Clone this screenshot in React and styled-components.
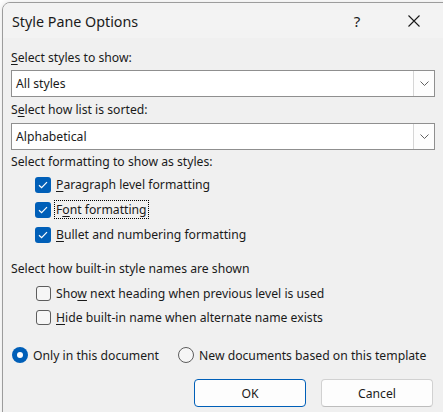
import React from "react";
import styled, { createGlobalStyle } from "styled-components";

const Global = createGlobalStyle`
  html, body { margin: 0; padding: 0; background: #ffffff; overflow: hidden; }
  body { font-family: "Noto Sans", "Open Sans", sans-serif; color: #1a1a1a; }
  * { box-sizing: border-box; }
`;

const Page = styled.div`
  width: 443px;
  height: 412px;
  padding: 2px 0 0 2px;
  overflow: hidden;
`;

const Dialog = styled.div`
  width: 460px;
  height: 420px;
  border: 1px solid #9c9c9c;
  border-radius: 8px 8px 0 0;
  background: #f0f0f0;
  overflow: hidden;
  box-shadow: 0 0 6px rgba(0,0,0,0.12);
`;

const TitleBar = styled.div`
  height: 35px;
  display: flex;
  align-items: center;
  background: #f3f3f3;
  padding-left: 9px;
  padding-top: 1px;
`;

const Title = styled.div`
  flex: 1;
  font-size: 14.3px;
  color: #1a1a1a;
`;

const TitleButton = styled.div`
  width: ${(p) => p.$w}px;
  flex-shrink: 0;
  display: flex;
  align-items: center;
  justify-content: center;
  font-size: 15px;
  color: #1a1a1a;
`;

const Body = styled.div`
  padding: 11px 0 0 8px;
  width: 433px;
  display: flex;
  flex-direction: column;
  font-size: 12.2px;
`;

const Label = styled.div`
  height: 18px;
  line-height: 18px;
  margin-top: ${(p) => p.$mt || 0}px;
  white-space: nowrap;
`;

const U = styled.span`
  text-decoration: underline;
  text-underline-offset: 2px;
`;

const Select = styled.div`
  margin-top: ${(p) => p.$mt || 0}px;
  height: 27px;
  width: 424px;
  background: #ffffff;
  border: 1px solid #8f8f8f;
  display: flex;
  align-items: stretch;
`;

const SelectValue = styled.div`
  flex: 1;
  display: flex;
  align-items: center;
  padding-left: 4px;
  font-size: 12.2px;
`;

const DropButton = styled.div`
  width: 21px;
  border-left: 1px solid #d6d6d6;
  background: #fdfdfd;
  display: flex;
  align-items: center;
  justify-content: center;
`;

const CheckList = styled.div`
  display: flex;
  flex-direction: column;
  margin-top: ${(p) => p.$mt || 0}px;
  padding-left: 24px;
`;

const CheckRow = styled.div`
  height: ${(p) => p.$h}px;
  display: flex;
  align-items: center;
  gap: 5px;
  white-space: nowrap;
`;

const Box = styled.div`
  width: ${(p) => (p.$checked ? 16 : 15)}px;
  height: ${(p) => (p.$checked ? 16 : 15)}px;
  margin-left: ${(p) => (p.$checked ? 0 : 1)}px;
  border-radius: 3px;
  background: ${(p) => (p.$checked ? "#005fb8" : "#f6f6f6")};
  border: ${(p) => (p.$checked ? "none" : "1px solid #5d5d5d")};
  display: flex;
  align-items: center;
  justify-content: center;
  flex-shrink: 0;
`;

const CheckText = styled.span`
  padding: 0 1px;
  line-height: 17px;
  border: 1px dotted ${(p) => (p.$focus ? "#000" : "transparent")};
  margin-left: -2px;
`;

const RadioRow = styled.div`
  margin-top: 14px;
  height: 24px;
  display: flex;
  align-items: center;
  padding-left: 1px;
`;

const RadioGroup = styled.div`
  display: flex;
  align-items: center;
  gap: 5px;
  width: ${(p) => (p.$w ? p.$w + "px" : "auto")};
  white-space: nowrap;
`;

const Radio = styled.div`
  width: 16px;
  height: 16px;
  border-radius: 50%;
  flex-shrink: 0;
  ${(p) =>
    p.$checked
      ? "background: #005fb8; display:flex; align-items:center; justify-content:center;"
      : "border: 1px solid #5d5d5d; background: #f6f6f6;"}
`;

const Dot = styled.div`
  width: 6px;
  height: 6px;
  border-radius: 50%;
  background: #ffffff;
`;

const Buttons = styled.div`
  margin-top: 12px;
  display: flex;
  justify-content: flex-end;
  gap: 15px;
  width: 422px;
`;

const Button = styled.button`
  width: 112px;
  height: 28px;
  border-radius: 4px;
  background: #fdfdfd;
  border: 1px solid ${(p) => (p.$primary ? "#005fb8" : "#d1d1d1")};
  border-bottom-color: ${(p) => (p.$primary ? "#005fb8" : "#bdbdbd")};
  font-family: inherit;
  font-size: 12.2px;
  color: #1a1a1a;
  padding: 0;
`;

const Chevron = () => (
  <svg width="9" height="5" viewBox="0 0 9 5">
    <path d="M0.5 0.5 L4.5 4.5 L8.5 0.5" fill="none" stroke="#606060" strokeWidth="1" />
  </svg>
);

const Tick = () => (
  <svg width="10" height="8" viewBox="0 0 10 8">
    <path d="M1 4.2 L3.6 6.6 L9 1.2" fill="none" stroke="#ffffff" strokeWidth="1.2" />
  </svg>
);

const CloseIcon = () => (
  <svg width="12" height="12" viewBox="0 0 12 12">
    <path d="M0.5 0.5 L11.5 11.5 M11.5 0.5 L0.5 11.5" stroke="#1a1a1a" strokeWidth="1.1" />
  </svg>
);

export default function App() {
  return (
    <>
      <Global />
      <Page>
        <Dialog>
          <TitleBar>
            <Title>Style Pane Options</Title>
            <TitleButton $w={68}>?</TitleButton>
            <TitleButton $w={46}>
              <CloseIcon />
            </TitleButton>
            <TitleButton $w={24} />
          </TitleBar>
          <Body>
            <Label>
              <U>S</U>elect styles to show:
            </Label>
            <Select $mt={3}>
              <SelectValue>All styles</SelectValue>
              <DropButton>
                <Chevron />
              </DropButton>
            </Select>
            <Label $mt={4}>
              S<U>e</U>lect how list is sorted:
            </Label>
            <Select $mt={4}>
              <SelectValue>Alphabetical</SelectValue>
              <DropButton>
                <Chevron />
              </DropButton>
            </Select>
            <Label $mt={3}>Select formatting to show as styles:</Label>
            <CheckList $mt={1}>
              <CheckRow $h={25}>
                <Box $checked>
                  <Tick />
                </Box>
                <CheckText>
                  <U>P</U>aragraph level formatting
                </CheckText>
              </CheckRow>
              <CheckRow $h={25}>
                <Box $checked>
                  <Tick />
                </Box>
                <CheckText $focus>
                  F<U>o</U>nt formatting
                </CheckText>
              </CheckRow>
              <CheckRow $h={25}>
                <Box $checked>
                  <Tick />
                </Box>
                <CheckText>
                  <U>B</U>ullet and numbering formatting
                </CheckText>
              </CheckRow>
            </CheckList>
            <Label $mt={13}>Select how built-in style names are shown</Label>
            <CheckList $mt={3}>
              <CheckRow $h={24}>
                <Box />
                <CheckText>
                  Sho<U>w</U> next heading when previous level is used
                </CheckText>
              </CheckRow>
              <CheckRow $h={24}>
                <Box />
                <CheckText>
                  <U>H</U>ide built-in name when alternate name exists
                </CheckText>
              </CheckRow>
            </CheckList>
            <RadioRow>
              <RadioGroup $w={166}>
                <Radio $checked>
                  <Dot />
                </Radio>
                <span>Only in this document</span>
              </RadioGroup>
              <RadioGroup>
                <Radio />
                <span>New documents based on this template</span>
              </RadioGroup>
            </RadioRow>
            <Buttons>
              <Button $primary>OK</Button>
              <Button>Cancel</Button>
            </Buttons>
          </Body>
        </Dialog>
      </Page>
    </>
  );
}
